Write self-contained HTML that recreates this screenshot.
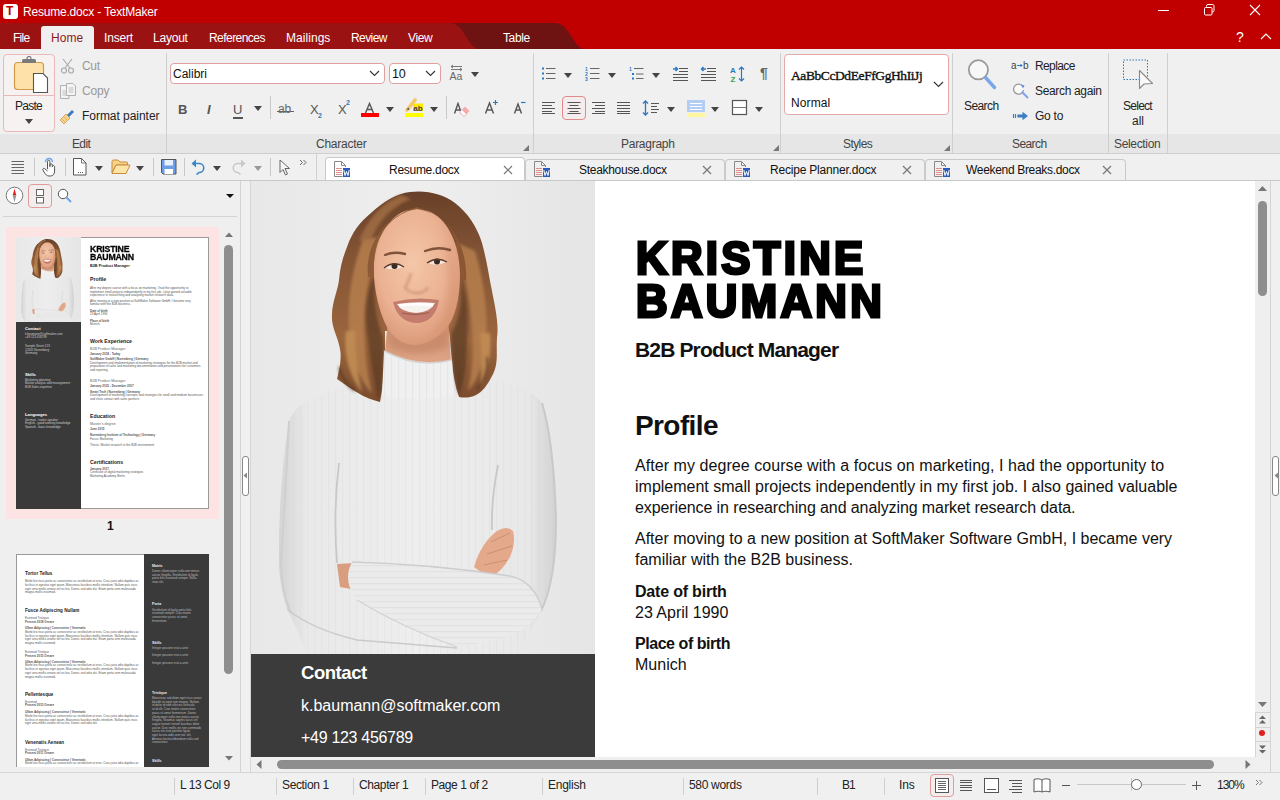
<!DOCTYPE html>
<html><head><meta charset="utf-8">
<style>
*{box-sizing:border-box;margin:0;padding:0}
html,body{width:1280px;height:800px;overflow:hidden;background:#f0f0f0;font-family:"Liberation Sans",sans-serif;color:#222}
.a{position:absolute}
.t{position:absolute;white-space:nowrap;line-height:1}
#title{left:0;top:0;width:1280px;height:23px;background:#c00000}
#menu{left:0;top:23px;width:1280px;height:26px;background:#c00000}
.mi{position:absolute;top:8px;font-size:12px;color:#fff;letter-spacing:-0.2px}
#ribbon{left:0;top:49px;width:1280px;height:105px;background:#f0f0f0}
#lband{left:0;top:134px;width:1280px;height:19px;background:#e6e6e6}
.gl{position:absolute;top:137px;font-size:12px;color:#444;letter-spacing:-0.2px}
.sep{position:absolute;width:1px;background:#cfcfcf}
.rt{position:absolute;font-size:12px;color:#222;white-space:nowrap;letter-spacing:-0.2px;line-height:1}
.box{position:absolute;background:#fff;border:1px solid #e0a0a0;border-radius:4px}
.tri{position:absolute;width:0;height:0;border-left:4px solid transparent;border-right:4px solid transparent;border-top:5px solid #444}
#tbar{left:0;top:154px;width:1280px;height:27px;background:#f0f0f0}
.tab{position:absolute;top:159px;height:21px;background:#f0f0f0;border:1px solid #c9c9c9;border-bottom:none;border-radius:4px 4px 0 0}
.tabt{position:absolute;top:5px;font-size:12px;color:#111;letter-spacing:-0.2px}
#side{left:0;top:181px;width:240px;height:591px;background:#efefef}
#doc{left:251px;top:181px;width:1004px;height:576px;background:#fff;overflow:hidden}
#status{left:0;top:772px;width:1280px;height:28px;background:#f0f0f0;border-top:1px solid #d6d6d6}
.st{position:absolute;top:6px;font-size:12px;color:#222;letter-spacing:-0.2px}
.ss{position:absolute;top:6px;width:1px;height:17px;background:#cfcfcf}
.body{font-size:16px;color:#111;letter-spacing:0.03px}
</style></head><body>

<!-- TITLE BAR -->
<div id="title" class="a">
  <div class="a" style="left:3px;top:4px;width:15px;height:15px;background:#fff;border-radius:3px"></div>
  <div class="t" style="left:6px;top:5px;font-size:12px;font-weight:bold;color:#c00000">T</div>
  <div class="t" style="left:23px;top:5.5px;color:#fff;font-size:12px;letter-spacing:-0.2px">Resume.docx - TextMaker</div>
  <div class="a" style="left:1158px;top:10px;width:11px;height:1px;background:#fff"></div>
  <svg class="a" style="left:1203px;top:4px" width="12" height="12"><rect x="1.5" y="3.5" width="7.5" height="7.5" rx="1" fill="none" stroke="#fff" stroke-width="1"/><path d="M3.5 2.5V2A1.5 1.5 0 0 1 5 0.5H9.5A1.5 1.5 0 0 1 11 2V6.5A1.5 1.5 0 0 1 9.5 8H9" fill="none" stroke="#fff" stroke-width="1"/></svg>
  <svg class="a" style="left:1249px;top:4px" width="12" height="12"><path d="M1 1L11 11M11 1L1 11" stroke="#fff" stroke-width="1.1"/></svg>
</div>

<!-- MENU -->
<div id="menu" class="a">
  <svg class="a" style="left:0;top:0" width="600" height="26">
    <path d="M0 0H455C470 0 472 26 485 26H0Z" fill="#9b1212"/>
    <path d="M450 0H555C570 0 573 26 585 26H480C467 26 465 0 450 0Z" fill="#6e1212"/>
  </svg>
  <div class="a" style="left:41px;top:3px;width:53px;height:23px;background:#f0f0f0;border-radius:3px 3px 0 0"></div>
  <div class="mi" style="left:13px;font-size:12px;letter-spacing:-0.75px">File</div>
  <div class="mi" style="left:51px;color:#8a1a1a;font-size:12px;letter-spacing:0.02px">Home</div>
  <div class="mi" style="left:104px;font-size:12px;letter-spacing:-0.18px">Insert</div>
  <div class="mi" style="left:153px;font-size:12px;letter-spacing:-0.22px">Layout</div>
  <div class="mi" style="left:209px;font-size:12px;letter-spacing:-0.55px">References</div>
  <div class="mi" style="left:286px;font-size:12px;letter-spacing:0.05px">Mailings</div>
  <div class="mi" style="left:351px;font-size:12px;letter-spacing:-0.59px">Review</div>
  <div class="mi" style="left:408px;font-size:12px;letter-spacing:-0.38px">View</div>
  <div class="mi" style="left:503px;font-size:12px;letter-spacing:-0.38px">Table</div>
  <div class="mi" style="left:1236px;top:6px;font-size:14px">?</div>
  <svg class="a" style="left:1260px;top:9px" width="12" height="8"><path d="M1 7L6 2L11 7" stroke="#fff" stroke-width="1.2" fill="none"/></svg>
</div>

<!-- RIBBON -->
<div id="ribbon" class="a"></div>
<div id="lband" class="a"></div>
<div class="a" style="left:0;top:153px;width:1280px;height:1px;background:#cfcfcf"></div>
<div id="ribc">
<!-- EDIT GROUP -->
<div class="a" style="left:3px;top:54px;width:52px;height:42px;border:1px solid #e9b9b9;border-radius:4px 4px 0 0;background:#f7f2f2"></div>
<div class="a" style="left:3px;top:95px;width:52px;height:37px;border:1px solid #e9b9b9;border-radius:0 0 4px 4px;background:#f7f2f2"></div>
<svg class="a" style="left:10px;top:56px" width="40" height="40">
  <rect x="4.5" y="6.5" width="29" height="27" rx="3" fill="#fde1a9" stroke="#d39a4c" stroke-width="1.2"/>
  <rect x="12" y="3" width="14" height="4" rx="1.5" fill="#7a7a7a"/>
  <circle cx="19" cy="2.5" r="2" fill="none" stroke="#7a7a7a" stroke-width="1.2"/>
  <path d="M23.5 17.5H33L37.5 22V36.5H23.5Z" fill="#fff" stroke="#555" stroke-width="1.1"/>
</svg>
<div class="rt" style="left:15px;top:100px;font-size:12px;letter-spacing:-0.73px">Paste</div>
<div class="tri" style="left:25px;top:119px"></div>

<svg class="a" style="left:60px;top:58px" width="16" height="16">
  <path d="M3 1L10 10M12 1L5 10" stroke="#aaa" stroke-width="1.2" fill="none"/>
  <circle cx="4" cy="12.5" r="2.5" fill="none" stroke="#aaa" stroke-width="1.2"/>
  <circle cx="11" cy="12.5" r="2.5" fill="none" stroke="#aaa" stroke-width="1.2"/>
</svg>
<div class="rt" style="left:82px;top:60px;color:#999;font-size:12px;letter-spacing:-0.32px">Cut</div>
<svg class="a" style="left:59px;top:82px" width="18" height="18">
  <path d="M1.5 3.5H8L10 5.5V16.5H1.5Z" fill="#f4f4f4" stroke="#b0b0b0"/>
  <path d="M7.5 1.5H14L16.5 4V13.5H7.5Z" fill="#f4f4f4" stroke="#b0b0b0"/>
  <path d="M3.5 9H8M3.5 11H8M3.5 13H8M9.5 6H14.5M9.5 8H14.5M9.5 10H14.5" stroke="#c0c0c0"/>
</svg>
<div class="rt" style="left:82px;top:85px;color:#999;font-size:12px;letter-spacing:-0.2px">Copy</div>
<svg class="a" style="left:58px;top:108px" width="18" height="18">
  <path d="M2 12L8 6L12 10L6 16Z" fill="#f5d48f" stroke="#d9a95a"/>
  <path d="M9 7L14 2L16 4L11 9Z" fill="#3b79b9"/>
  <path d="M4 11L8 15M6 9L10 13" stroke="#d9a95a" stroke-width="0.8"/>
</svg>
<div class="rt" style="left:82px;top:110px;font-size:12px;letter-spacing:-0.04px">Format painter</div>
<div class="gl" style="left:72px;font-size:12px;letter-spacing:-0.65px">Edit</div>
<div class="sep" style="left:166px;top:53px;height:100px"></div>

<!-- CHARACTER GROUP -->
<div class="box" style="left:170px;top:63px;width:215px;height:21px"></div>
<div class="rt" style="left:173px;top:68px;color:#111;font-size:12px;letter-spacing:-0.01px">Calibri</div>
<svg class="a" style="left:369px;top:70px" width="11" height="7"><path d="M1 1L5.5 5.5L10 1" stroke="#333" stroke-width="1.1" fill="none"/></svg>
<div class="box" style="left:389px;top:63px;width:52px;height:21px"></div>
<div class="rt" style="left:392px;top:68px;font-size:12.5px;color:#111">10</div>
<svg class="a" style="left:425px;top:70px" width="11" height="7"><path d="M1 1L5.5 5.5L10 1" stroke="#333" stroke-width="1.1" fill="none"/></svg>
<svg class="a" style="left:449px;top:64px" width="17" height="18">
  <path d="M2 2.5H13M4 1L2 2.5L4 4M2 5.5H13M11 4L13 5.5L11 7" stroke="#777" stroke-width="1" fill="none"/>
  <text x="0.5" y="16" font-family="Liberation Sans" font-size="10.5" fill="#666">Aa</text>
</svg>
<div class="tri" style="left:471px;top:72px"></div>

<div class="rt" style="left:178px;top:103px;font-size:13px;font-weight:bold;color:#555">B</div>
<div class="rt" style="left:207px;top:103px;font-size:13px;font-style:italic;font-weight:bold;color:#555">I</div>
<div class="rt" style="left:233px;top:103px;font-size:13px;color:#555">U</div>
<div class="a" style="left:233px;top:117px;width:10px;height:1.5px;background:#555"></div>
<div class="tri" style="left:254px;top:106px"></div>
<div class="sep" style="left:270px;top:96px;height:23px;background:#c8c8c8"></div>
<div class="rt" style="left:278px;top:103px;font-size:12px;color:#666">ab</div>
<div class="a" style="left:277px;top:111px;width:17px;height:1px;background:#666"></div>
<div class="rt" style="left:310px;top:103px;font-size:13px;color:#555">X</div>
<div class="rt" style="left:318px;top:112px;font-size:7px;color:#2a79c0;font-weight:bold">2</div>
<div class="rt" style="left:338px;top:103px;font-size:13px;color:#555">X</div>
<div class="rt" style="left:346px;top:99px;font-size:7px;color:#2a79c0;font-weight:bold">2</div>
<svg class="a" style="left:360px;top:102px" width="20" height="16">
  <path d="M5.5 11L9.5 1.5L13.5 11M7.2 7.5H11.8" stroke="#555" stroke-width="1.4" fill="none"/>
  <rect x="1" y="11" width="18" height="4" fill="#f00"/>
</svg>
<div class="tri" style="left:386px;top:107px"></div>
<svg class="a" style="left:404px;top:98px" width="20" height="20">
  <rect x="9" y="5.5" width="10" height="7.5" fill="#ffe800"/>
  <text x="9.3" y="12.5" font-family="Liberation Sans" font-weight="bold" font-size="8" fill="#444">ab</text>
  <path d="M3 12L11 2" stroke="#f7c667" stroke-width="3.6" stroke-linecap="round"/>
  <path d="M2.5 11.5L4.5 9.5L5.5 12Z" fill="#555"/>
  <rect x="1" y="15" width="18" height="4" fill="#ffff00"/>
</svg>
<div class="tri" style="left:430px;top:107px"></div>
<div class="sep" style="left:446px;top:96px;height:23px;background:#c8c8c8"></div>
<svg class="a" style="left:453px;top:102px" width="20" height="18">
  <path d="M1.5 11.5L5 1.5L8.5 11.5M2.8 8H7.2" stroke="#555" stroke-width="1.4" fill="none"/>
  <path d="M12 4.5L16.5 9L11 14.5L6.5 10Z" fill="#f6a9aa"/>
  <path d="M6.5 10L9 7.5L13.5 12L11 14.5Z" fill="#fff" stroke="#d89" stroke-width="0.6"/>
</svg>
<svg class="a" style="left:484px;top:98px" width="16" height="18">
  <path d="M1.5 15.5L5.5 5L9.5 15.5M3 12H8" stroke="#555" stroke-width="1.4" fill="none"/>
  <path d="M9 4.5H14M11.5 2V7" stroke="#2a79c0" stroke-width="1.2"/>
</svg>
<svg class="a" style="left:513px;top:98px" width="16" height="18">
  <path d="M1.5 15.5L5 6L8.5 15.5M3 12H7.5" stroke="#555" stroke-width="1.4" fill="none"/>
  <path d="M8 4.5H12.5" stroke="#2a79c0" stroke-width="1.2"/>
</svg>
<div class="gl" style="left:316px;font-size:12px;letter-spacing:-0.24px">Character</div>
<svg class="a" style="left:522px;top:145px" width="8" height="7"><path d="M7 0V6H1Z" fill="#777"/></svg>
<div class="sep" style="left:533px;top:53px;height:100px"></div>

<!-- PARAGRAPH GROUP -->
<svg class="a" style="left:541px;top:66px" width="16" height="16">
  <path d="M1 2.5H3M1 7.5H3M1 12.5H3" stroke="#2a79c0" stroke-width="2"/>
  <path d="M5 2.5H14.5M5 7.5H14.5M5 12.5H14.5" stroke="#666" stroke-width="1"/>
</svg>
<div class="tri" style="left:564px;top:73px"></div>
<svg class="a" style="left:585px;top:66px" width="16" height="16">
  <text x="0" y="5" font-family="Liberation Sans" font-weight="bold" font-size="5" fill="#2a79c0">1</text>
  <text x="0" y="10" font-family="Liberation Sans" font-weight="bold" font-size="5" fill="#2a79c0">2</text>
  <text x="0" y="15" font-family="Liberation Sans" font-weight="bold" font-size="5" fill="#2a79c0">3</text>
  <path d="M5 2.5H14.5M5 7.5H14.5M5 12.5H14.5" stroke="#666" stroke-width="1"/>
</svg>
<div class="tri" style="left:608px;top:73px"></div>
<svg class="a" style="left:629px;top:66px" width="16" height="16">
  <text x="0" y="5" font-family="Liberation Sans" font-weight="bold" font-size="5" fill="#2a79c0">1</text>
  <path d="M3 8H5M3 12.5H5" stroke="#2a79c0" stroke-width="2"/>
  <path d="M5 2.5H14.5M7 8H14.5M7 12.5H14.5" stroke="#666" stroke-width="1"/>
</svg>
<div class="tri" style="left:652px;top:73px"></div>
<svg class="a" style="left:672px;top:66px" width="17" height="16">
  <path d="M1 3H5M3.5 1L5.5 3L3.5 5" stroke="#2a79c0" stroke-width="1.5" fill="none"/>
  <path d="M7 2.5H16M7 5.5H16M1 8.5H16M1 11.5H16M1 14.5H16" stroke="#555" stroke-width="1"/>
</svg>
<svg class="a" style="left:700px;top:66px" width="17" height="16">
  <path d="M6 3H1.5M3.5 1L1.5 3L3.5 5" stroke="#2a79c0" stroke-width="1.5" fill="none"/>
  <path d="M7 2.5H16M7 5.5H16M1 8.5H16M1 11.5H16M1 14.5H16" stroke="#555" stroke-width="1"/>
</svg>
<svg class="a" style="left:730px;top:66px" width="16" height="16">
  <text x="0" y="7" font-family="Liberation Sans" font-weight="bold" font-size="8" fill="#2a79c0">A</text>
  <text x="0.5" y="15.5" font-family="Liberation Sans" font-weight="bold" font-size="8" fill="#3aa04a">Z</text>
  <path d="M11.5 1V15M9 3.5L11.5 1L14 3.5M9 12.5L11.5 15L14 12.5" stroke="#2a79c0" stroke-width="1.2" fill="none"/>
</svg>
<div class="rt" style="left:760px;top:66px;font-size:14px;font-weight:bold;color:#666">¶</div>

<svg class="a" style="left:542px;top:101px" width="14" height="13">
  <path d="M0 1.5H13M0 4.5H10M0 7.5H13M0 10.5H10M0 12.5H13" stroke="#555" stroke-width="1"/>
</svg>
<div class="a" style="left:562px;top:96px;width:24px;height:24px;border:1px solid #e08a8a;border-radius:4px;background:#f5eded"></div>
<svg class="a" style="left:567px;top:101px" width="14" height="13">
  <path d="M0.5 1.5H13.5M2.5 4.5H11.5M0.5 7.5H13.5M2.5 10.5H11.5M0.5 12.5H13.5" stroke="#555" stroke-width="1"/>
</svg>
<svg class="a" style="left:592px;top:101px" width="14" height="13">
  <path d="M0 1.5H13M3 4.5H13M0 7.5H13M3 10.5H13M0 12.5H13" stroke="#555" stroke-width="1"/>
</svg>
<svg class="a" style="left:617px;top:101px" width="14" height="13">
  <path d="M0 1.5H13M0 4.5H13M0 7.5H13M0 10.5H13M0 12.5H13" stroke="#555" stroke-width="1"/>
</svg>
<svg class="a" style="left:642px;top:100px" width="18" height="16">
  <path d="M3.5 1V15M1 3.5L3.5 1L6 3.5M1 12.5L3.5 15L6 12.5" stroke="#2a79c0" stroke-width="1.3" fill="none"/>
  <path d="M9 3.5H17M9 6.5H15M9 9.5H17M9 12.5H15" stroke="#555" stroke-width="1"/>
</svg>
<div class="tri" style="left:667px;top:107px"></div>
<svg class="a" style="left:686px;top:99px" width="20" height="19">
  <rect x="1" y="1" width="18" height="12" fill="#b3cdf5"/>
  <path d="M4 4.5H16M4 7.5H16M4 10.5H16" stroke="#fff" stroke-width="1"/>
  <rect x="1" y="14" width="18" height="4" fill="#fff6a0"/>
</svg>
<div class="tri" style="left:711px;top:107px"></div>
<svg class="a" style="left:731px;top:99px" width="17" height="17">
  <rect x="1.5" y="1.5" width="14" height="14" fill="#fff" stroke="#555" stroke-width="1.2"/>
  <path d="M1.5 8.5H15.5" stroke="#777" stroke-width="1"/>
</svg>
<div class="tri" style="left:755px;top:107px"></div>
<div class="gl" style="left:621px;font-size:12px;letter-spacing:-0.27px">Paragraph</div>
<svg class="a" style="left:772px;top:145px" width="8" height="7"><path d="M7 0V6H1Z" fill="#777"/></svg>
<div class="sep" style="left:780px;top:53px;height:100px"></div>

<!-- STYLES -->
<div class="box" style="left:784px;top:54px;width:165px;height:61px;border-color:#e4a9a9"></div>
<div class="rt" style="left:791px;top:68.7px;font-family:'Liberation Serif',serif;font-size:13.5px;color:#111;letter-spacing:-0.41px;-webkit-text-stroke:0.35px #111">AaBbCcDdEeFfGgHhIiJj</div>
<div class="rt" style="left:791px;top:97px;color:#111;font-size:12px;letter-spacing:0.1px">Normal</div>
<svg class="a" style="left:933px;top:81px" width="11" height="7"><path d="M1 1L5.5 5.5L10 1" stroke="#333" stroke-width="1.1" fill="none"/></svg>
<div class="gl" style="left:843px;font-size:12px;letter-spacing:-0.58px">Styles</div>
<svg class="a" style="left:943px;top:145px" width="8" height="7"><path d="M7 0V6H1Z" fill="#777"/></svg>
<div class="sep" style="left:952px;top:53px;height:100px"></div>

<!-- SEARCH -->
<svg class="a" style="left:964px;top:57px" width="36" height="36">
  <circle cx="14.4" cy="12.8" r="9.6" fill="#f7f7f7" stroke="#9a9a9a" stroke-width="1.8"/>
  <path d="M21.5 20.5L30.5 30.5" stroke="#7ba6ea" stroke-width="3.4" stroke-linecap="round"/>
</svg>
<div class="rt" style="left:964px;top:100px;font-size:12px;letter-spacing:-0.59px">Search</div>
<svg class="a" style="left:1011px;top:59px" width="20" height="12">
  <text x="0" y="10" font-family="Liberation Sans" font-size="10" fill="#444">a</text>
  <text x="12" y="10" font-family="Liberation Sans" font-size="10" fill="#444">b</text>
  <path d="M6 6.5H11M9.5 5L11 6.5L9.5 8" stroke="#2a79c0" stroke-width="1" fill="none"/>
</svg>
<div class="rt" style="left:1035px;top:60px;font-size:12px;letter-spacing:-0.61px">Replace</div>
<svg class="a" style="left:1012px;top:82px" width="18" height="18">
  <path d="M10.8 4.5A5 5 0 1 0 11.5 8" fill="#fafafa" stroke="#9a9a9a" stroke-width="1.3"/>
  <path d="M9 2.5L12.5 3.5L11 6.5Z" fill="#5b8fdc"/>
  <path d="M10.5 10.5L15.5 15.5" stroke="#7ba6ea" stroke-width="2" stroke-linecap="round"/>
</svg>
<div class="rt" style="left:1035px;top:85px;font-size:12px;letter-spacing:-0.34px">Search again</div>
<svg class="a" style="left:1012px;top:111px" width="18" height="10">
  <path d="M1.5 3V7M3.5 3V7M5.5 5H11" stroke="#3b7fc4" stroke-width="1.2"/><path d="M5.5 5H11" stroke="#3b7fc4" stroke-width="3"/>
  <path d="M10.5 0.8L16 5L10.5 9.2Z" fill="#3b7fc4"/>
</svg>
<div class="rt" style="left:1035px;top:110px;font-size:12px;letter-spacing:-0.24px">Go to</div>
<div class="gl" style="left:1012px;font-size:12px;letter-spacing:-0.59px">Search</div>
<div class="sep" style="left:1108px;top:53px;height:100px"></div>

<!-- SELECTION -->
<svg class="a" style="left:1121px;top:57px" width="34" height="34">
  <rect x="2.5" y="3" width="24" height="19.5" fill="none" stroke="#2a79c0" stroke-width="1" stroke-dasharray="1.5 1.5"/>
  <path d="M18.5 13.5V31.5L23 27L31.5 26.5Z" fill="#fafafa" stroke="#888" stroke-width="1.1" stroke-linejoin="round"/>
</svg>
<div class="rt" style="left:1123px;top:100px;font-size:12px;letter-spacing:-0.73px">Select</div>
<div class="rt" style="left:1132px;top:115px;font-size:12px;letter-spacing:0px">all</div>
<div class="gl" style="left:1114px;font-size:12px;letter-spacing:-0.34px">Selection</div>
<div class="sep" style="left:1167px;top:53px;height:100px"></div>

</div>

<!-- TOOLBAR / TABS -->
<div id="tbar" class="a"></div>
<div class="a" style="left:0;top:180px;width:1280px;height:1px;background:#c9c9c9"></div>
<!-- QUICK TOOLBAR -->
<svg class="a" style="left:11px;top:160px" width="14" height="15"><path d="M0.5 1.5H13M0.5 4.5H13M0.5 7.5H13M0.5 10.5H13M0.5 13.5H13" stroke="#666" stroke-width="1"/></svg>
<div class="sep" style="left:34px;top:158px;height:18px;background:#c8c8c8"></div>
<svg class="a" style="left:41px;top:157px" width="16" height="20">
  <path d="M4.5 5A3.5 3.5 0 0 1 11.5 5" stroke="#6aa0f0" stroke-width="1.5" fill="none"/>
  <path d="M6.5 12V4.5A1.2 1.2 0 0 1 8.9 4.5V10M8.9 9V8A1.2 1.2 0 0 1 11.3 8V10M11.3 9.5A1.2 1.2 0 0 1 13.6 9.5V14C13.6 17 12 19 9.5 19H8C6 19 4.5 17.5 3 15L1.8 12.5A1.1 1.1 0 0 1 3.6 11.6L6.5 14" stroke="#555" stroke-width="1" fill="#fff"/>
</svg>
<div class="sep" style="left:65px;top:158px;height:18px;background:#c8c8c8"></div>
<svg class="a" style="left:73px;top:158px" width="14" height="18">
  <path d="M0.5 0.5H8.5L13 5V17H0.5Z" fill="#fff" stroke="#555" stroke-width="1"/>
  <path d="M8.5 0.5V5H13" fill="none" stroke="#555" stroke-width="0.8"/>
  <path d="M5 14.5H6M7 14.5H8M9 14.5H10" stroke="#555" stroke-width="1"/>
</svg>
<div class="tri" style="left:95px;top:166px"></div>
<svg class="a" style="left:111px;top:159px" width="20" height="16">
  <path d="M1 2.5A1.5 1.5 0 0 1 2.5 1H7L9 3H15.5A1 1 0 0 1 16.5 4V6H5L1 14Z" fill="#f8d289" stroke="#c98c3e" stroke-width="1"/>
  <path d="M1 14.5L5 6H19L15 14.5Z" fill="#fde4a8" stroke="#c98c3e" stroke-width="1"/>
</svg>
<div class="tri" style="left:136px;top:166px"></div>
<div class="sep" style="left:153px;top:158px;height:18px;background:#c8c8c8"></div>
<svg class="a" style="left:161px;top:159px" width="16" height="16">
  <path d="M0.5 0.5H15V15H2L0.5 13.5Z" fill="#6b9de8" stroke="#555" stroke-width="1"/>
  <rect x="3.5" y="1" width="8.5" height="5.5" fill="#e8f0fb"/>
  <rect x="3.5" y="10" width="8.5" height="5" fill="#fff"/>
</svg>
<div class="sep" style="left:184px;top:158px;height:18px;background:#c8c8c8"></div>
<svg class="a" style="left:191px;top:158px" width="15" height="17">
  <path d="M3 5.5H8.5A4.5 4.5 0 0 1 8 14.5L5.5 16.5" stroke="#3b86c8" stroke-width="1.6" fill="none"/>
  <path d="M0.5 5.5L5 1.5V9.5Z" fill="#3b86c8"/>
</svg>
<div class="tri" style="left:213px;top:166px"></div>
<svg class="a" style="left:231px;top:158px" width="15" height="17">
  <path d="M12 5.5H6.5A4.5 4.5 0 0 0 7 14.5L9.5 16.5" stroke="#c8c8c8" stroke-width="1.6" fill="none"/>
  <path d="M14.5 5.5L10 1.5V9.5Z" fill="#c8c8c8"/>
</svg>
<div class="tri" style="left:254px;top:166px;border-top-color:#999"></div>
<div class="sep" style="left:270px;top:158px;height:18px;background:#c8c8c8"></div>
<svg class="a" style="left:279px;top:159px" width="13" height="17"><path d="M1 1V13.5L4 10.5L6.5 16L8.5 15L6 9.5H10.5Z" fill="#f6f6f6" stroke="#666" stroke-width="1"/></svg>
<svg class="a" style="left:299px;top:159px" width="9" height="7"><path d="M1 1L3.5 3.5L1 6M4.5 1L7 3.5L4.5 6" stroke="#666" stroke-width="1" fill="none"/></svg>
<div class="sep" style="left:316px;top:154px;height:26px;background:#d0d0d0"></div>

<!-- TABS -->
<div class="tab" style="left:325px;top:157px;width:200px;height:23px;background:#fff"></div>
<div class="tab" style="left:525px;width:200px"></div>
<div class="tab" style="left:725px;width:200px"></div>
<div class="tab" style="left:925px;width:201px"></div>

<svg class="a" style="left:334px;top:161px" width="17" height="17">
  <path d="M8.5 15.5H0.5V0.5H7.5L11.5 4.5V6M7.5 0.5V4.5H11.5" fill="none" stroke="#888" stroke-width="1"/>
  <path d="M2 7.5H8M2 9.5H8M2 11.5H8M2 13.5H8" stroke="#e58c8c" stroke-width="1"/>
  <rect x="9" y="7" width="7" height="9" fill="#2b5cb8"/>
  <path d="M9.8 9L11 14.5L12.5 10.5L14 14.5L15.2 9" stroke="#fff" stroke-width="1" fill="none"/>
</svg>
<div class="t" style="left:389px;top:164px;color:#111;font-size:12px;letter-spacing:-0.28px">Resume.docx</div>
<svg class="a" style="left:503px;top:165px" width="10" height="10"><path d="M1 1L9 9M9 1L1 9" stroke="#777" stroke-width="1.2"/></svg>
<svg class="a" style="left:534px;top:161px" width="17" height="17">
  <path d="M8.5 15.5H0.5V0.5H7.5L11.5 4.5V6M7.5 0.5V4.5H11.5" fill="none" stroke="#888" stroke-width="1"/>
  <path d="M2 7.5H8M2 9.5H8M2 11.5H8M2 13.5H8" stroke="#e58c8c" stroke-width="1"/>
  <rect x="9" y="7" width="7" height="9" fill="#2b5cb8"/>
  <path d="M9.8 9L11 14.5L12.5 10.5L14 14.5L15.2 9" stroke="#fff" stroke-width="1" fill="none"/>
</svg>
<div class="t" style="left:579px;top:164px;color:#111;font-size:12px;letter-spacing:-0.29px">Steakhouse.docx</div>
<svg class="a" style="left:702px;top:165px" width="10" height="10"><path d="M1 1L9 9M9 1L1 9" stroke="#777" stroke-width="1.2"/></svg>
<svg class="a" style="left:734px;top:161px" width="17" height="17">
  <path d="M8.5 15.5H0.5V0.5H7.5L11.5 4.5V6M7.5 0.5V4.5H11.5" fill="none" stroke="#888" stroke-width="1"/>
  <path d="M2 7.5H8M2 9.5H8M2 11.5H8M2 13.5H8" stroke="#e58c8c" stroke-width="1"/>
  <rect x="9" y="7" width="7" height="9" fill="#2b5cb8"/>
  <path d="M9.8 9L11 14.5L12.5 10.5L14 14.5L15.2 9" stroke="#fff" stroke-width="1" fill="none"/>
</svg>
<div class="t" style="left:770px;top:164px;color:#111;font-size:12px;letter-spacing:-0.2px">Recipe Planner.docx</div>
<svg class="a" style="left:902px;top:165px" width="10" height="10"><path d="M1 1L9 9M9 1L1 9" stroke="#777" stroke-width="1.2"/></svg>
<svg class="a" style="left:934px;top:161px" width="17" height="17">
  <path d="M8.5 15.5H0.5V0.5H7.5L11.5 4.5V6M7.5 0.5V4.5H11.5" fill="none" stroke="#888" stroke-width="1"/>
  <path d="M2 7.5H8M2 9.5H8M2 11.5H8M2 13.5H8" stroke="#e58c8c" stroke-width="1"/>
  <rect x="9" y="7" width="7" height="9" fill="#2b5cb8"/>
  <path d="M9.8 9L11 14.5L12.5 10.5L14 14.5L15.2 9" stroke="#fff" stroke-width="1" fill="none"/>
</svg>
<div class="t" style="left:966px;top:164px;color:#111;font-size:12px;letter-spacing:-0.32px">Weekend Breaks.docx</div>
<svg class="a" style="left:1102px;top:165px" width="10" height="10"><path d="M1 1L9 9M9 1L1 9" stroke="#777" stroke-width="1.2"/></svg>

<!-- SIDEBAR -->
<div id="side" class="a"></div>
<div class="a" style="left:240px;top:181px;width:1px;height:591px;background:#d4d4d4"></div>
<!-- SIDEBAR TOOLS -->
<svg class="a" style="left:5px;top:186px" width="19" height="19">
  <circle cx="9.5" cy="9.5" r="8.3" fill="#fff" stroke="#777" stroke-width="1"/>
  <path d="M9.5 2.5L11.3 9.5H7.7Z" fill="#e02020"/>
  <path d="M9.5 16.5L11.3 9.5H7.7Z" fill="#999"/>
</svg>
<div class="a" style="left:28px;top:184px;width:24px;height:24px;border:1px solid #e09c9c;border-radius:4px;background:#f3eded"></div>
<svg class="a" style="left:35px;top:188px" width="10" height="16">
  <rect x="1.5" y="1.5" width="7" height="6" fill="#fff" stroke="#666" stroke-width="1"/>
  <rect x="1.5" y="9.5" width="7" height="5.5" fill="#fff" stroke="#666" stroke-width="1"/>
</svg>
<svg class="a" style="left:57px;top:188px" width="16" height="16">
  <circle cx="6" cy="6" r="4.7" fill="#fff" stroke="#555" stroke-width="1"/>
  <path d="M9.5 9.5L14 14" stroke="#6a9ff0" stroke-width="1.8"/>
</svg>
<div class="tri" style="left:226px;top:194px;border-top-color:#111;border-left-width:4px;border-right-width:4px;border-top-width:4px"></div>
<div class="a" style="left:3px;top:216px;width:234px;height:1px;background:#d4d4d4"></div>

<!-- THUMB 1 -->
<div class="a" style="left:6px;top:227px;width:213px;height:292px;background:#fde3e3"></div>
<div class="a" style="left:16px;top:237px;width:193px;height:272px;background:#fff;border:1px solid #999"></div>
<div class="a" style="left:16px;top:237px;width:65px;height:272px;background:#3a3a3a"></div>
<svg class="a" style="left:16px;top:237px" width="65" height="85" viewBox="0 0 344 450" preserveAspectRatio="xMidYMin slice"><use href="#photoG"/></svg>
<div class="t" style="left:90px;top:244.5px;font-size:9.5px;font-weight:bold;color:#000;letter-spacing:-0.2px;line-height:8px;-webkit-text-stroke:0.3px #000;transform:scaleX(0.92);transform-origin:0 0">KRISTINE<br>BAUMANN</div>
<div class="t" style="left:90px;top:264.5px;font-size:3.8px;font-weight:bold;color:#222">B2B Product Manager</div>
<div class="t" style="left:90px;top:277px;font-size:5.2px;font-weight:bold;color:#222">Profile</div>
<div class="t" style="left:90px;top:287px;font-size:3px;line-height:3.6px;color:#555;letter-spacing:0px">After my degree course with a focus on marketing, I had the opportunity to<br>implement small projects independently in my first job. I also gained valuable<br>experience in researching and analyzing market research data.</div>
<div class="t" style="left:90px;top:299.5px;font-size:3px;line-height:3.6px;color:#555;letter-spacing:0px">After moving to a new position at SoftMaker Software GmbH, I became very<br>familiar with the B2B business.</div>
<div class="t" style="left:90px;top:309.5px;font-size:3px;line-height:3.6px;color:#555;letter-spacing:0px"><b>Date of birth</b><br>23 April 1990</div>
<div class="t" style="left:90px;top:319.5px;font-size:3px;line-height:3.6px;color:#555;letter-spacing:0px"><b>Place of birth</b><br>Munich</div>
<div class="t" style="left:90px;top:338.5px;font-size:5.2px;font-weight:bold;color:#222">Work Experience</div>
<div class="t" style="left:90px;top:347.5px;font-size:3.6px;color:#666">B2B Product Manager</div>
<div class="t" style="left:90px;top:352.5px;font-size:3px;line-height:3.6px;color:#555;letter-spacing:0px"><b>January 2018 - Today</b></div>
<div class="t" style="left:90px;top:358px;font-size:3px;line-height:3.6px;color:#555;letter-spacing:0px"><b>SoftMaker GmbH | Nuremberg | Germany</b><br>Development and implementation of marketing strategies for the B2B market and<br>preparation of sales and marketing documentation and presentations for customers<br>and reporting</div>
<div class="t" style="left:90px;top:380px;font-size:3.6px;color:#666">B2B Product Manager</div>
<div class="t" style="left:90px;top:385px;font-size:3px;line-height:3.6px;color:#555;letter-spacing:0px"><b>January 2015 - December 2017</b></div>
<div class="t" style="left:90px;top:390.5px;font-size:3px;line-height:3.6px;color:#555;letter-spacing:0px"><b>Smart Tech | Nuremberg | Germany</b><br>Development of marketing concepts and strategies for small and medium businesses<br>and close contact with sales partners</div>
<div class="t" style="left:90px;top:413.5px;font-size:5.2px;font-weight:bold;color:#222">Education</div>
<div class="t" style="left:90px;top:423px;font-size:3.6px;color:#666">Master's degree</div>
<div class="t" style="left:90px;top:428px;font-size:3px;line-height:3.6px;color:#555;letter-spacing:0px"><b>June 2015</b></div>
<div class="t" style="left:90px;top:434px;font-size:3px;line-height:3.6px;color:#555;letter-spacing:0px"><b>Nuremberg Institute of Technology | Germany</b><br>Focus: Marketing</div>
<div class="t" style="left:90px;top:444px;font-size:3px;line-height:3.6px;color:#555;letter-spacing:0px">Thesis: Market research in the B2B environment</div>
<div class="t" style="left:90px;top:459.5px;font-size:5.2px;font-weight:bold;color:#222">Certifications</div>
<div class="t" style="left:90px;top:467.5px;font-size:3px;line-height:3.6px;color:#555;letter-spacing:0px"><b>January 2017</b><br>Certificate of digital marketing strategies<br>Marketing Academy Berlin</div>
<div class="t" style="left:25px;top:326.5px;font-size:4.2px;font-weight:bold;color:#fff">Contact</div>
<div class="t" style="left:25px;top:332.5px;font-size:3px;line-height:4.3px;color:#ccc;letter-spacing:0px;line-height:3.6px">k.baumann@softmaker.com<br>+49 123 456789</div>
<div class="t" style="left:25px;top:345px;font-size:3px;line-height:3.6px;color:#ccc;letter-spacing:0px;line-height:3.6px">Sample Street 123<br>12345 Nuremberg<br>Germany</div>
<div class="t" style="left:25px;top:372.5px;font-size:4.2px;font-weight:bold;color:#fff">Skills</div>
<div class="t" style="left:25px;top:378.5px;font-size:3px;line-height:5.6px;color:#ccc;letter-spacing:0px;line-height:3.6px">Marketing planning<br>Market analysis and management<br>B2B Sales expertise</div>
<div class="t" style="left:25px;top:412.5px;font-size:4.2px;font-weight:bold;color:#fff">Languages</div>
<div class="t" style="left:25px;top:418.5px;font-size:3px;line-height:5.4px;color:#ccc;letter-spacing:0px;line-height:3.6px">German - native speaker<br>English - good working knowledge<br>Spanish - basic knowledge</div>
<div class="t" style="left:107px;top:520px;font-size:12px;font-weight:bold;color:#111">1</div>
<div class="a" style="left:16px;top:554px;width:193px;height:213px;background:#fff;border:1px solid #999;border-bottom:none"></div>
<div class="a" style="left:144px;top:554px;width:65px;height:213px;background:#3a3a3a"></div>
<div class="t" style="left:25px;top:572px;font-size:4.6px;font-weight:bold;color:#222">Tortor Tellus</div>
<div class="t" style="left:25px;top:580px;font-size:3px;line-height:3.8px;color:#555;letter-spacing:0px">Morbi leo risus porta ac consectetur ac vestibulum at eros. Cras justo odio dapibus ac<br>facilisis in egestas eget quam. Maecenas faucibus mollis interdum. Nullam quis risus<br>eget urna mollis ornare vel eu leo. Donec sed odio dui. Etiam porta sem malesuada<br>magna mollis euismod.</div>
<div class="t" style="left:25px;top:608.5px;font-size:4.6px;font-weight:bold;color:#222">Fusce Adipiscing Nullam</div>
<div class="t" style="left:25px;top:617px;font-size:3px;line-height:3.8px;color:#555;letter-spacing:0px">Euismod Tristique<br><b>Present 2018 Ornare</b></div>
<div class="t" style="left:25px;top:627px;font-size:3px;line-height:3.8px;color:#555;letter-spacing:0px"><b>Ullam Adipiscing | Consectetur | Venenatis</b><br>Morbi leo risus porta ac consectetur ac vestibulum at eros. Cras justo odio dapibus ac<br>facilisis in egestas eget quam. Maecenas faucibus mollis interdum. Nullam quis risus<br>eget urna mollis ornare vel eu leo. Donec sed odio dui. Etiam porta sem malesuada<br>magna mollis euismod.</div>
<div class="t" style="left:25px;top:651px;font-size:3px;line-height:3.8px;color:#555;letter-spacing:0px">Euismod Tristique<br><b>Present 2015 Ornare</b></div>
<div class="t" style="left:25px;top:660.5px;font-size:3px;line-height:3.8px;color:#555;letter-spacing:0px"><b>Ullam Adipiscing | Consectetur | Venenatis</b><br>Morbi leo risus porta ac consectetur ac vestibulum at eros. Cras justo odio dapibus ac<br>facilisis in egestas eget quam. Maecenas faucibus mollis interdum. Nullam quis risus<br>eget urna mollis ornare vel eu leo. Donec sed odio dui. Etiam porta sem malesuada<br>magna mollis euismod.</div>
<div class="t" style="left:25px;top:693px;font-size:4.6px;font-weight:bold;color:#222">Pellentesque</div>
<div class="t" style="left:25px;top:700.5px;font-size:3px;line-height:3.8px;color:#555;letter-spacing:0px">Euismod<br><b>Present 2013 Ornare</b></div>
<div class="t" style="left:25px;top:711px;font-size:3px;line-height:3.8px;color:#555;letter-spacing:0px"><b>Ullam Adipiscing | Consectetur | Venenatis</b><br>Morbi leo risus porta ac consectetur ac vestibulum at eros. Cras justo odio dapibus ac<br>facilisis in egestas eget quam. Maecenas faucibus mollis interdum. Nullam quis risus<br>eget urna mollis ornare vel eu leo. Donec sed odio dui.</div>
<div class="t" style="left:25px;top:741px;font-size:4.6px;font-weight:bold;color:#222">Venenatis Aenean</div>
<div class="t" style="left:25px;top:748.5px;font-size:3px;line-height:3.8px;color:#555;letter-spacing:0px">Euismod Tristique<br><b>Present 2011 Ornare</b></div>
<div class="t" style="left:25px;top:758.5px;font-size:3px;line-height:3.8px;color:#555;letter-spacing:0px"><b>Ullam Adipiscing | Consectetur | Venenatis</b><br>Morbi leo risus porta ac consectetur ac vestibulum at eros. Cras justo odio dapibus ac</div>
<div class="t" style="left:152px;top:564.5px;font-size:3.6px;font-weight:bold;color:#eee">Matris</div>
<div class="t" style="left:152px;top:570.0px;font-size:3px;color:#bbb;line-height:3.7px">Donec ullamcorper nulla non metus<br>auctor fringilla. Vestibulum id ligula<br>porta felis euismod semper. Nulla<br>vitae elit.</div>
<div class="t" style="left:152px;top:603px;font-size:3.6px;font-weight:bold;color:#eee">Porta</div>
<div class="t" style="left:152px;top:608.5px;font-size:3px;color:#bbb;line-height:3.7px">Vestibulum id ligula porta felis<br>euismod semper. Cras mattis<br>consectetur purus sit amet<br>fermentum.</div>
<div class="t" style="left:152px;top:641.5px;font-size:3.6px;font-weight:bold;color:#eee">Skills</div>
<div class="t" style="left:152px;top:647.0px;font-size:3px;color:#bbb;line-height:3.7px">Integer posuere erat a ante<br><br>Integer posuere erat a ante<br><br>Integer posuere erat a ante<br></div>
<div class="t" style="left:152px;top:691.5px;font-size:3.6px;font-weight:bold;color:#eee">Tristique</div>
<div class="t" style="left:152px;top:697.0px;font-size:3px;color:#bbb;line-height:3.7px">Maecenas sed diam eget risus varius<br>blandit sit amet non magna. Nullam<br>id dolor id nibh ultricies vehicula<br>ut id elit. Cras mattis consectetur<br>purus sit amet fermentum. Donec<br>ullamcorper nulla non metus auctor<br>fringilla. Vivamus sagittis lacus vel<br>augue laoreet rutrum faucibus dolor<br>auctor. Duis mollis est non commodo<br>luctus nisi erat porttitor ligula<br>eget lacinia odio sem nec elit.<br>Aenean lacinia bibendum nulla sed<br>consectetur.</div>
<div class="t" style="left:152px;top:759.5px;font-size:3.6px;font-weight:bold;color:#eee">Skills</div>
<!-- THUMB SCROLLBAR -->
<svg class="a" style="left:224px;top:231px" width="10" height="7"><path d="M1 6L5 1.5L9 6Z" fill="#777"/></svg>
<div class="a" style="left:224px;top:245px;width:9px;height:429px;background:#8e8e8e;border-radius:5px"></div>
<svg class="a" style="left:224px;top:755px" width="10" height="7"><path d="M1 1L5 5.5L9 1Z" fill="#777"/></svg>
<!-- SPLITTER -->
<div class="a" style="left:242px;top:456px;width:7px;height:40px;border:1px solid #888;border-radius:3px;background:#fff"></div>
<svg class="a" style="left:243px;top:472px" width="5" height="7"><path d="M4 0.5V6.5L0.5 3.5Z" fill="#888"/></svg>


<!-- DOC -->
<div id="doc" class="a">
<svg class="a" style="left:0;top:0" width="344" height="473" viewBox="0 0 344 473">
  <defs>
    <linearGradient id="bg" x1="0" y1="0" x2="1" y2="0">
      <stop offset="0" stop-color="#e8e8e8"/><stop offset="0.5" stop-color="#eeeeee"/><stop offset="1" stop-color="#e5e5e5"/>
    </linearGradient>
    <linearGradient id="hairg" x1="0" y1="0" x2="0" y2="1">
      <stop offset="0" stop-color="#684029"/><stop offset="0.3" stop-color="#835434"/><stop offset="0.7" stop-color="#9b663d"/><stop offset="1" stop-color="#7a4b2d"/>
    </linearGradient>
    <radialGradient id="skin" cx="0.45" cy="0.4" r="0.65">
      <stop offset="0" stop-color="#f4c7a8"/><stop offset="0.6" stop-color="#ebb293"/><stop offset="1" stop-color="#d69473"/>
    </radialGradient>
    <linearGradient id="neckg" x1="0" y1="0" x2="0" y2="1">
      <stop offset="0" stop-color="#c98a6a"/><stop offset="1" stop-color="#e0a688"/>
    </linearGradient>
    <linearGradient id="sw" x1="0" y1="0" x2="1" y2="0">
      <stop offset="0" stop-color="#d4d4d4"/><stop offset="0.1" stop-color="#e9e9e9"/><stop offset="0.5" stop-color="#eeeeee"/><stop offset="0.9" stop-color="#e8e8e8"/><stop offset="1" stop-color="#d2d2d2"/>
    </linearGradient>
    <pattern id="rib" width="7" height="10" patternUnits="userSpaceOnUse">
      <rect x="0" width="1.2" height="10" fill="#d0d0d0"/>
    </pattern>
    <pattern id="ribh" width="10" height="6" patternUnits="userSpaceOnUse">
      <rect y="0" width="10" height="1.2" fill="#d6d6d6"/>
    </pattern>
    <filter id="b1" x="-10%" y="-10%" width="120%" height="120%"><feGaussianBlur stdDeviation="0.7"/></filter>
    <filter id="b2" x="-20%" y="-20%" width="140%" height="140%"><feGaussianBlur stdDeviation="1.6"/></filter>
    <filter id="b3" x="-30%" y="-30%" width="160%" height="160%"><feGaussianBlur stdDeviation="3"/></filter>
  </defs>
  <g id="photoG"><rect width="344" height="473" fill="url(#bg)"/>
  <g filter="url(#b1)">
  <!-- sweater body -->
  <path d="M134 168Q167 186 201 178L232 196Q276 204 291 222Q303 262 305 339Q305 400 290 430Q278 452 266 473L56 473Q48 452 36 428Q27 400 28 374Q28 300 38 240Q46 216 100 205Z" fill="url(#sw)"/>
  <path d="M134 168Q167 186 201 178L232 196Q276 204 291 222Q303 262 305 339Q305 400 290 430Q278 452 266 473L56 473Q48 452 36 428Q27 400 28 374Q28 300 38 240Q46 216 100 205Z" fill="url(#rib)" opacity="0.22"/>
  <path d="M88 282Q82 330 86 382M247 284Q240 320 241 349" stroke="#c8c8c8" stroke-width="1.8" fill="none"/>
  <path d="M38 240Q34 320 30 380Q30 410 40 432" stroke="#cfcfcf" stroke-width="2" fill="none"/>
  <path d="M291 222Q303 262 305 339Q305 400 290 430" stroke="#c9c9c9" stroke-width="2" fill="none"/>
  <!-- hands -->
  <path d="M223 386Q230 362 246 350Q256 344 262 350Q265 362 259 376Q251 391 238 397Z" fill="#e3a98a"/>
  <path d="M240 361L259 352M236 373L261 365M233 384L256 379" stroke="#c88c6e" stroke-width="0.9"/>
  <path d="M86 383L103 382L105 409L89 406Z" fill="#d99e80"/>
  <!-- crossed forearm -->
  <path d="M101 381Q180 383 259 395Q283 400 291 428Q277 452 246 459L206 466Q150 446 106 419Q91 400 101 381Z" fill="#ebebeb"/>
  <path d="M101 381Q180 383 259 395Q283 400 291 428Q277 452 246 459L206 466Q150 446 106 419Q91 400 101 381Z" fill="url(#ribh)" opacity="0.45"/>
  <path d="M101 381Q180 383 259 395Q283 400 291 428" stroke="#cdcdcd" stroke-width="1.4" fill="none"/>
  <path d="M106 419Q150 446 206 466" stroke="#d2d2d2" stroke-width="1.2" fill="none"/>
  <path d="M36 428Q60 448 106 459L206 467" stroke="#cacaca" stroke-width="1.4" fill="none"/>
  </g>
  <!-- hair silhouette -->
  <path d="M159 11C176 9 192 13 204 22C217 32 226 46 231 62C236 80 238 96 241 110C244 126 248 142 246 157C245 171 248 183 241 195C236 205 231 211 225 214C219 217 213 217 208 216C204 205 202 192 201 180C200 168 199 158 198 150L134 150C134 160 134 170 134 181C133 196 131 210 129 221C121 219 113 216 107 212C99 207 93 203 86 198C88 189 91 179 89 168C87 156 80 146 81 134C81 121 87 109 88 99C89 86 92 76 96 66C101 51 109 41 120 32C132 21 146 12 159 11Z" fill="url(#hairg)" filter="url(#b1)"/>
  <!-- strands -->
  <g filter="url(#b2)" opacity="0.8">
    <path d="M112 58C101 88 96 120 98 150C100 176 108 198 121 213C116 190 113 170 113 146C113 116 119 86 132 56Z" fill="#b98150"/>
    <path d="M224 70C233 100 237 130 235 160C233 181 227 199 217 210C221 190 223 170 221 146C219 116 213 90 206 62Z" fill="#b98150"/>
    <path d="M95 150C92 172 98 195 111 211C107 194 104 174 104 150Z" fill="#c99458"/>
    <path d="M239 152C241 172 237 193 229 208C231 190 231 172 229 152Z" fill="#c99458"/>
    <path d="M150 14C130 22 116 40 108 60L120 58C128 40 140 26 160 18Z" fill="#a36f45"/>
  </g>
  <g filter="url(#b2)">
    <path d="M124 95C121 120 126 141 132 156C134 176 132 200 128 220C123 200 119 180 117 160C113 135 115 110 124 95Z" fill="#4e301f" opacity="0.6"/>
    <path d="M210 98C212 120 208 141 200 153C200 176 203 200 208 214C214 200 216 180 216 160C218 135 216 115 210 98Z" fill="#4e301f" opacity="0.6"/>
    <path d="M88 186C90 196 96 204 104 210M236 176C238 188 234 200 226 208" stroke="#4a2c1c" stroke-width="2.5" fill="none" opacity="0.6"/>
  </g>
  <!-- neck -->
  <path d="M137 136L197 136L200 182Q167 190 134 172Z" fill="url(#neckg)" filter="url(#b1)"/>
  <path d="M140 150Q165 172 195 148L197 165Q167 180 137 165Z" fill="#b97a5c" opacity="0.45" filter="url(#b3)"/>
  <!-- collar -->
  <g filter="url(#b1)">
  <path d="M133 170Q167 188 201 179L203 214Q167 222 131 214Z" fill="#f0f0f0"/>
  <path d="M133 170Q167 188 201 179L203 214Q167 222 131 214Z" fill="url(#rib)" opacity="0.3"/>
  <path d="M133 170Q167 188 201 179" stroke="#d4d4d4" stroke-width="1.5" fill="none"/>
  </g>
  <!-- face -->
  <path d="M166 28C190 28 208 54 209 93C209 118 204 138 194 149C184 159 173 164 162 164C149 163 139 154 133 140C125 120 122 99 123 82C126 50 143 28 166 28Z" fill="url(#skin)" filter="url(#b1)"/>
  <path d="M194 60C204 80 208 105 204 128C200 142 192 152 182 158C196 140 200 115 198 92Z" fill="#d4906e" opacity="0.45" filter="url(#b3)"/>
  <!-- hair fringe sides over face -->
  <path d="M166 28C148 31 134 43 127 60C123 72 122 85 123 96L117 96C114 70 127 38 166 26Z" fill="#8d5a37" filter="url(#b1)"/>
  <path d="M166 28C188 31 202 46 206 63C209 76 210 89 209 99L215 99C216 70 206 38 166 26Z" fill="#8a5634" filter="url(#b1)"/>
  <!-- eyebrows -->
  <path d="M134 74Q143 70 154 73M174 70Q187 65 199 69" stroke="#80523a" stroke-width="2.4" fill="none" stroke-linecap="round" filter="url(#b1)"/>
  <!-- eyes -->
  <g filter="url(#b1)">
  <path d="M134 87Q143 80 152 86Q143 90 134 87Z" fill="#f3e6de"/>
  <path d="M177 82Q186 76 195 81Q186 86 177 82Z" fill="#f3e6de"/>
  <circle cx="143.5" cy="85" r="3" fill="#3a2a22"/>
  <circle cx="186" cy="80.5" r="3" fill="#3a2a22"/>
  <path d="M133 87Q143 79 153 86M176 82Q186 75 196 81" stroke="#5a3a2c" stroke-width="1.3" fill="none"/>
  </g>
  <!-- nose -->
  <path d="M160 92Q157 102 154 107Q160 113 168 112Q175 111 177 106" stroke="#c4846a" stroke-width="1.6" fill="none" filter="url(#b2)"/>
  <!-- mouth -->
  <g filter="url(#b1)">
  <path d="M142 121Q165 115 188 119Q184 142 165 142Q147 141 142 121Z" fill="#c47c6c"/>
  <path d="M146 123Q165 120 184 122Q180 131 165 132Q150 131 146 123Z" fill="#f6f2ee"/>
  <path d="M148 124.5Q165 122.5 182 124" stroke="#ffffff" stroke-width="2.5" fill="none"/>
  <path d="M151 132Q165 135 178 131.5" stroke="#9c5a50" stroke-width="1.2" fill="none"/>
  </g>
</g></svg>
<div class="a" style="left:0;top:473px;width:344px;height:103px;background:#3b3b3b"></div>
<div class="t" style="left:384.5px;top:54px;font-size:46px;font-weight:bold;color:#000;transform:scaleX(0.95);transform-origin:0 0;letter-spacing:3.5px;-webkit-text-stroke:3px #000">KRISTINE</div>
<div class="t" style="left:384.5px;top:97px;font-size:46px;font-weight:bold;color:#000;transform:scaleX(0.95);transform-origin:0 0;letter-spacing:3.5px;-webkit-text-stroke:3px #000">BAUMANN</div>
<div class="t" style="left:384px;top:157.72px;font-size:21px;font-weight:bold;color:#111;letter-spacing:-0.85px">B2B Product Manager</div>
<div class="t" style="left:384px;top:230.90px;font-size:28px;font-weight:bold;color:#111;letter-spacing:-0.6px">Profile</div>
<div class="t" style="left:384px;top:277.21px;font-size:16px;color:#111;letter-spacing:0.06px">After my degree course with a focus on marketing, I had the opportunity to</div>
<div class="t" style="left:384px;top:298.21px;font-size:16px;color:#111">implement small projects independently in my first job. I also gained valuable</div>
<div class="t" style="left:384px;top:318.96px;font-size:16px;color:#111;letter-spacing:-0.1px">experience in researching and analyzing market research data.</div>
<div class="t" style="left:384px;top:350.21px;font-size:16px;color:#111">After moving to a new position at SoftMaker Software GmbH, I became very</div>
<div class="t" style="left:384px;top:371.46px;font-size:16px;color:#111">familiar with the B2B business.</div>
<div class="t" style="left:384px;top:402.71px;font-size:16px;font-weight:bold;color:#111;letter-spacing:-0.2px">Date of birth</div>
<div class="t" style="left:384px;top:424.16px;font-size:16px;color:#111">23 April 1990</div>
<div class="t" style="left:384px;top:455.21px;font-size:16px;font-weight:bold;color:#111;letter-spacing:-0.45px">Place of birth</div>
<div class="t" style="left:384px;top:476.21px;font-size:16px;color:#111">Munich</div>
<div class="t" style="left:50px;top:483.24px;font-size:18.5px;font-weight:bold;color:#fff;letter-spacing:-0.45px">Contact</div>
<div class="t" style="left:50px;top:517.46px;font-size:16px;color:#fff">k.baumann@softmaker.com</div>
<div class="t" style="left:50px;top:548.96px;font-size:16px;color:#fff;letter-spacing:-0.3px">+49 123 456789</div>

</div>
<!-- V SCROLLBAR -->
<div class="a" style="left:1255px;top:181px;width:15px;height:576px;background:#efefef"></div>
<div class="a" style="left:1270px;top:181px;width:1px;height:591px;background:#d4d4d4"></div>
<svg class="a" style="left:1257px;top:184px" width="11" height="8"><path d="M1 7L5.5 2L10 7Z" fill="#777"/></svg>
<div class="a" style="left:1258px;top:201px;width:9px;height:95px;background:#8e8e8e;border-radius:5px"></div>
<svg class="a" style="left:1257px;top:701px" width="11" height="8"><path d="M1 1L5.5 6L10 1Z" fill="#777"/></svg>
<div class="a" style="left:1255px;top:712px;width:15px;height:45px;border-top:1px solid #d4d4d4;border-left:1px solid #d4d4d4"></div>
<div class="a" style="left:1255px;top:727px;width:15px;height:1px;background:#d4d4d4"></div>
<div class="a" style="left:1255px;top:741px;width:15px;height:1px;background:#d4d4d4"></div>
<svg class="a" style="left:1258px;top:714px" width="9" height="11"><path d="M1 5L4.5 1.5L8 5ZM1 9.5L4.5 6L8 9.5Z" fill="#666"/></svg>
<div class="a" style="left:1259px;top:730px;width:6px;height:6px;border-radius:50%;background:#e02020"></div>
<svg class="a" style="left:1258px;top:744px" width="9" height="11"><path d="M1 1.5L4.5 5L8 1.5ZM1 6L4.5 9.5L8 6Z" fill="#666"/></svg>
<div class="a" style="left:1272px;top:456px;width:7px;height:40px;border:1px solid #888;border-radius:3px;background:#fff"></div>
<svg class="a" style="left:1274px;top:472px" width="5" height="7"><path d="M4 0.5V6.5L0.5 3.5Z" fill="#888"/></svg>
<!-- H SCROLLBAR -->
<div class="a" style="left:251px;top:757px;width:1004px;height:15px;background:#efefef"></div>
<svg class="a" style="left:255px;top:759px" width="8" height="11"><path d="M6.5 1V10L1.5 5.5Z" fill="#777"/></svg>
<div class="a" style="left:277px;top:760px;width:937px;height:9px;background:#8e8e8e;border-radius:5px"></div>
<svg class="a" style="left:1244px;top:759px" width="8" height="11"><path d="M1.5 1V10L6.5 5.5Z" fill="#777"/></svg>
<div class="a" style="left:250px;top:181px;width:1px;height:591px;background:#d6d6d6"></div>


<!-- STATUS -->
<div id="status" class="a"></div>
<!-- STATUS BAR -->
<div class="ss" style="left:174px;top:778px"></div>
<div class="t" style="top:779px;left:180px;color:#222;font-size:12px;letter-spacing:-0.45px">L 13 Col 9</div>
<div class="ss" style="left:276px;top:778px"></div>
<div class="t" style="top:779px;left:282px;color:#222;font-size:12px;letter-spacing:-0.36px">Section 1</div>
<div class="ss" style="left:353px;top:778px"></div>
<div class="t" style="top:779px;left:359px;color:#222;font-size:12px;letter-spacing:-0.38px">Chapter 1</div>
<div class="ss" style="left:425px;top:778px"></div>
<div class="t" style="top:779px;left:431px;color:#222;font-size:12px;letter-spacing:-0.42px">Page 1 of 2</div>
<div class="ss" style="left:542px;top:778px"></div>
<div class="t" style="top:779px;left:548px;color:#222;font-size:12px;letter-spacing:-0.25px">English</div>
<div class="ss" style="left:683px;top:778px"></div>
<div class="t" style="top:779px;left:689px;color:#222;font-size:12px;letter-spacing:-0.31px">580 words</div>
<div class="ss" style="left:817px;top:778px"></div>
<div class="t" style="top:779px;left:842px;color:#222;font-size:12px;letter-spacing:-1.0px">B1</div>
<div class="ss" style="left:884px;top:778px"></div>
<div class="t" style="top:779px;left:899px;color:#222;font-size:12px;letter-spacing:-0.13px">Ins</div>
<div class="a" style="left:930px;top:774px;width:24px;height:23px;border:1px solid #e09c9c;border-radius:4px;background:#f3eded"></div>
<svg class="a" style="left:934px;top:777px" width="16" height="17"><rect x="1.5" y="1.5" width="13" height="14" fill="#fff" stroke="#555"/><path d="M4 4.5H12M4 6.5H12M4 8.5H12M4 10.5H12M4 12.5H12" stroke="#666" stroke-width="1"/></svg>
<svg class="a" style="left:959px;top:778px" width="14" height="14"><path d="M1 2.5H13M1 4.5H13M1 7.5H13M1 9.5H13M1 12.5H13" stroke="#555" stroke-width="1"/></svg>
<svg class="a" style="left:983px;top:777px" width="17" height="17"><rect x="1.5" y="1.5" width="14" height="14" fill="#fff" stroke="#555"/><path d="M4 12.5H13" stroke="#555" stroke-width="1"/></svg>
<svg class="a" style="left:1008px;top:778px" width="16" height="15"><path d="M1 2.5H14M4 5.5H14M4 8.5H14M1 11.5H14M4 14.5H14" stroke="#555" stroke-width="1"/></svg>
<svg class="a" style="left:1033px;top:777px" width="18" height="16"><path d="M1 2.5C4 1.5 7 1.5 9 3C11 1.5 14 1.5 17 2.5V15C14 14 11 14 9 15C7 14 4 14 1 15Z M9 3V15" fill="#fff" stroke="#555" stroke-width="1"/></svg>
<div class="a" style="left:1062px;top:785px;width:8px;height:1px;background:#555"></div>
<div class="a" style="left:1077px;top:784px;width:109px;height:1px;background:#c8c8c8"></div>
<div class="a" style="left:1131px;top:778px;width:1px;height:13px;background:#c8c8c8"></div>
<div class="a" style="left:1131px;top:779px;width:11px;height:11px;border:1px solid #666;border-radius:50%;background:#fff"></div>
<div class="a" style="left:1192px;top:785px;width:9px;height:1px;background:#555"></div>
<div class="a" style="left:1196px;top:781px;width:1px;height:9px;background:#555"></div>
<div class="t" style="top:779px;left:1217px;color:#222;font-size:12px;letter-spacing:-1.0px">130%</div>
<svg class="a" style="left:1255px;top:779px" width="9" height="7"><path d="M1 1L3.5 3.5L1 6M4.5 1L7 3.5L4.5 6" stroke="#777" stroke-width="1" fill="none"/></svg>


</body></html>
